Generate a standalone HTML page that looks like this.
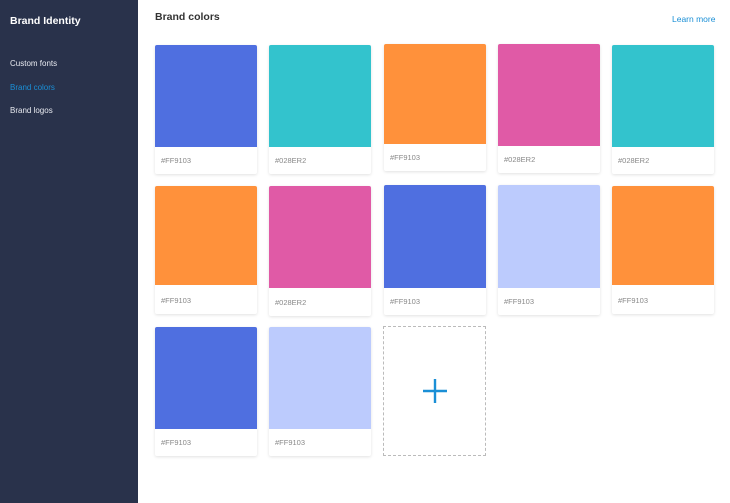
<!DOCTYPE html><html><head><style>
body{margin:0;width:730px;height:503px;background:#fff;font-family:"Liberation Sans",sans-serif;position:relative;overflow:hidden}
.sb{position:absolute;left:0;top:0;width:138px;height:503px;background:#29324b}
.sb h1{position:absolute;left:10px;top:15px;margin:0;font-size:10.5px;color:#fff;font-weight:bold}
.sb a{position:absolute;left:10px;font-size:8px;color:#e8eaf0}
.t{position:absolute;left:155px;top:11px;font-size:10.5px;font-weight:bold;color:#333}
.lm{position:absolute;left:672px;top:14px;font-size:8.5px;color:#1a8fd6}
.c{position:absolute;width:102px;background:#fff;box-shadow:0 1px 3px rgba(0,0,0,.12);border-radius:2px;overflow:hidden}
.c div{width:100%}
.c span{position:absolute;left:6px;bottom:9px;font-size:7.5px;color:#888}
.add{position:absolute;left:383px;top:326px;width:101px;height:128px;border:1px dashed #bbb}
</style></head><body>
<div class="sb"><h1>Brand Identity</h1>
<a style="top:59px">Custom fonts</a><a style="top:83px;color:#1a8fd6">Brand colors</a><a style="top:106px">Brand logos</a></div>
<div class="t">Brand colors</div><div class="lm">Learn more</div>

<div class="c" style="left:155px;top:45px;height:129px"><div style="height:102px;background:#4f6fe0"></div><span>#FF9103</span></div>
<div class="c" style="left:269px;top:45px;height:129px"><div style="height:102px;background:#33c3cd"></div><span>#028ER2</span></div>
<div class="c" style="left:384px;top:44px;height:127px"><div style="height:100px;background:#ff913b"></div><span>#FF9103</span></div>
<div class="c" style="left:498px;top:44px;height:129px"><div style="height:102px;background:#e05aa6"></div><span>#028ER2</span></div>
<div class="c" style="left:612px;top:45px;height:129px"><div style="height:102px;background:#33c3cd"></div><span>#028ER2</span></div>

<div class="c" style="left:155px;top:186px;height:128px"><div style="height:99px;background:#ff913b"></div><span>#FF9103</span></div>
<div class="c" style="left:269px;top:186px;height:130px"><div style="height:102px;background:#e05aa6"></div><span>#028ER2</span></div>
<div class="c" style="left:384px;top:185px;height:130px"><div style="height:103px;background:#4f6fe0"></div><span>#FF9103</span></div>
<div class="c" style="left:498px;top:185px;height:130px"><div style="height:103px;background:#bccbfd"></div><span>#FF9103</span></div>
<div class="c" style="left:612px;top:186px;height:128px"><div style="height:99px;background:#ff913b"></div><span>#FF9103</span></div>

<div class="c" style="left:155px;top:327px;height:129px"><div style="height:102px;background:#4f6fe0"></div><span>#FF9103</span></div>
<div class="c" style="left:269px;top:327px;height:129px"><div style="height:102px;background:#bccbfd"></div><span>#FF9103</span></div>
<div class="add"><svg width="101" height="128"><path d="M39 64H63M51 52V76" stroke="#1a8fd6" stroke-width="2.4"/></svg></div>
</body></html>
